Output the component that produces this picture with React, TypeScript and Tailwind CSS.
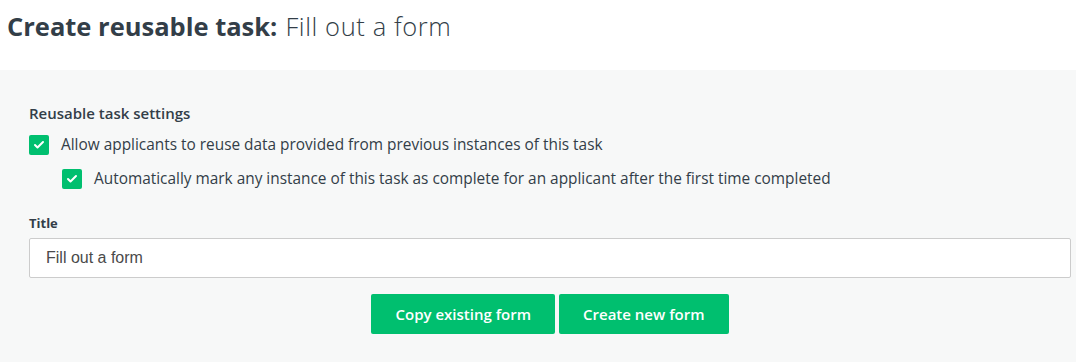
import { Check } from "lucide-react";

function Checkbox({ children }: { children: React.ReactNode }) {
  return (
    <label className="flex items-center gap-3">
      <span className="flex h-5 w-5 shrink-0 items-center justify-center rounded-[2px] bg-[#00bf6f]">
        <Check className="h-3 w-3 text-white" strokeWidth={4} />
      </span>
      <span>{children}</span>
    </label>
  );
}

export default function App() {
  return (
    <div
      className="h-[362px] w-[1076px] bg-white text-[#333e48]"
      style={{ fontFamily: '"Open Sans", "Noto Sans", sans-serif' }}
    >
      <h1 className="flex h-[70px] items-start pl-[7px] pt-[9px] text-[25.5px] leading-[34px]">
        <span className="font-bold">Create reusable task:</span>
        <span className="ml-[8px] font-light tracking-[0.6px]">Fill out a form</span>
      </h1>

      <div className="h-[292px] bg-[#f7f8f8] pl-[29px] pr-[5px] pt-[32px]">
        <div className="text-[15px] font-semibold leading-[22px]">Reusable task settings</div>

        <div className="mt-[11px] flex flex-col gap-[14px] text-[15.4px] leading-[20px]">
          <Checkbox>Allow applicants to reuse data provided from previous instances of this task</Checkbox>
          <div className="pl-[33px]">
            <Checkbox>
              Automatically mark any instance of this task as complete for an applicant after the first time completed
            </Checkbox>
          </div>
        </div>

        <div className="mt-[25px] text-[13px] font-bold leading-[18px]">Title</div>
        <input
          readOnly
          value="Fill out a form"
          className="mt-[6px] block h-[40px] w-full rounded-[2px] border border-[#ccc] bg-white px-4 text-[16px] text-[#4a4a4a] outline-none"
          style={{ fontFamily: '"Liberation Sans", Arial, sans-serif' }}
        />

        <div className="mt-[16px] flex justify-center gap-[4px]">
          <button className="h-[40px] rounded-[2px] bg-[#00bf6f] px-[24px] text-[15px] font-semibold text-white">
            Copy existing form
          </button>
          <button className="h-[40px] rounded-[2px] bg-[#00bf6f] px-[24px] text-[15px] font-semibold text-white">
            Create new form
          </button>
        </div>
      </div>
    </div>
  );
}
